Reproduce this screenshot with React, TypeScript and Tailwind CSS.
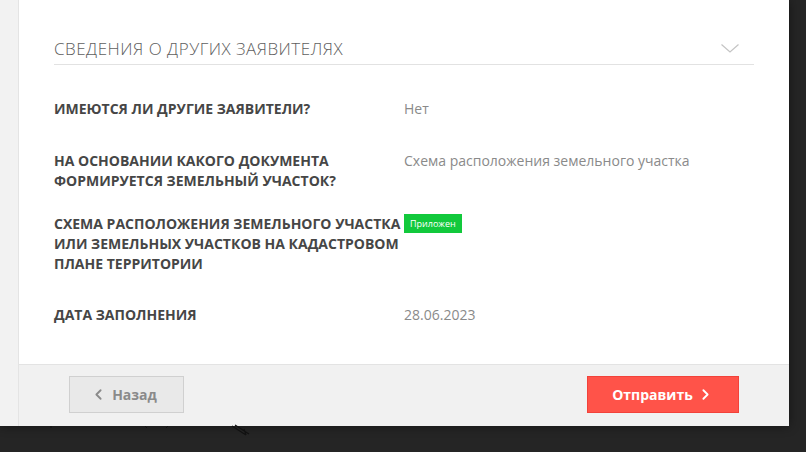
import { ChevronLeft, ChevronRight } from 'lucide-react';

const rows = [
    { label: ['Имеются ли другие заявители?'], value: 'Нет', mt: 'mt-[34px]' },
    { label: ['На основании какого документа', 'формируется земельный участок?'], value: 'Схема расположения земельного участка', mt: 'mt-[32px]' },
    { label: ['Схема расположения земельного участка', 'или земельных участков на кадастровом', 'плане территории'], badge: 'Приложен', mt: 'mt-[23px]' },
    { label: ['Дата заполнения'], value: '28.06.2023', mt: 'mt-[31px]' },
];

const App = () => {
    return (
        <div className="relative w-[806px] h-[452px] bg-[#252525] overflow-hidden font-['Open_Sans',sans-serif]">
            {/* page drawing peeking out below the modal */}
            <svg className="absolute left-0 top-[420px]" width="400" height="32" viewBox="0 0 400 32" fill="none">
                <path d="M232 6 L246 15 M235 5 L249 14 M244 9 L246 15" stroke="#111" strokeWidth="1.2" />
                <path d="M51 6 v2 M145 6 l2 2 M168 6 l-2 2" stroke="#111" strokeWidth="1" />
            </svg>

            <div className="flex w-[789px] h-[426px] shadow-[0_0_10px_rgba(0,0,0,0.45)]">
                {/* left strip */}
                <div className="w-[19px] h-full bg-[#f2f2f2] border-r border-[#e4e4e4]" />

                {/* panel */}
                <div className="flex-1 flex flex-col bg-white">
                    <div className="h-[365px] px-[35px] border-b border-[#e3e3e3]">
                        {/* section header */}
                        <div className="flex items-center justify-between pt-[38px] pb-[4px] border-b border-[#e2e2e2]">
                            <span className="text-[17px] leading-[22px] font-light text-[#606060] tracking-[0.5px]">
                                СВЕДЕНИЯ О ДРУГИХ ЗАЯВИТЕЛЯХ
                            </span>
                            <svg className="mr-[15px] mt-[-2px]" width="18" height="9" viewBox="0 0 18 9" fill="none">
                                <path d="M0.5 0.5 L9 8 L17.5 0.5" stroke="#c4c4c4" strokeWidth="1.2" />
                            </svg>
                        </div>

                        {/* rows */}
                        {rows.map((row, i) => (
                            <div key={i} className={`flex ${row.mt}`}>
                                <div className="w-[350px] shrink-0 text-[14px] leading-[20px] font-bold uppercase text-[#464646]">
                                    {row.label.map((l, j) => (
                                        <div key={j}>{l}</div>
                                    ))}
                                </div>
                                {row.badge ? (
                                    <div className="flex items-start">
                                        <span className="block h-[19px] px-[6px] bg-[#12c93c] text-white text-[9px] leading-[19px]">
                                            {row.badge}
                                        </span>
                                    </div>
                                ) : (
                                    <div className="text-[14px] leading-[20px] text-[#8a8a8a]">{row.value}</div>
                                )}
                            </div>
                        ))}
                    </div>

                    {/* footer */}
                    <div className="flex-1 bg-[#f1f1f1] flex items-start justify-between pt-[11px] px-[50px]">
                        <button className="flex items-center justify-center gap-[5px] w-[115px] h-[37px] bg-[#e9e9e9] border border-[#d0d0d0] text-[14px] font-bold text-[#8a8a8a]">
                            <ChevronLeft className="w-[17px] h-[17px] ml-[-6px]" strokeWidth={2.6} />
                            Назад
                        </button>
                        <button className="flex items-center justify-center gap-[4px] w-[152px] h-[37px] bg-[#ff5349] border border-[#f2423a] text-[14px] font-bold text-white">
                            Отправить
                            <ChevronRight className="w-[17px] h-[17px]" strokeWidth={2.6} />
                        </button>
                    </div>
                </div>
            </div>
        </div>
    );
};

export default App;
